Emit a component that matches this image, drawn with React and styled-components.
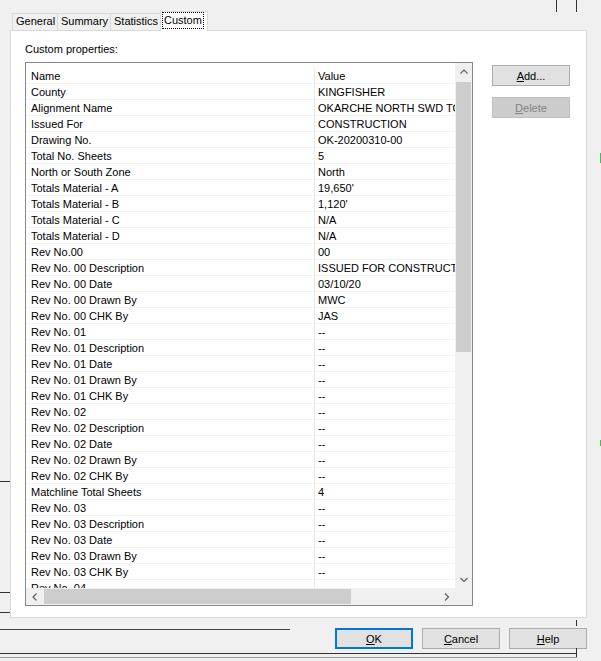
import React from 'react'
import styled, { createGlobalStyle, css } from 'styled-components'

const GlobalStyle = createGlobalStyle`
  html, body {
    margin: 0;
    padding: 0;
    background: #f0f0f0;
  }
  body {
    font-family: "Liberation Sans", Arial, sans-serif;
    font-size: 11px;
    color: #000;
  }
`

const Window = styled.div`
  position: relative;
  width: 601px;
  height: 661px;
  overflow: hidden;
  background: #f0f0f0;
  padding-top: 11px;
  box-sizing: border-box;
`

const TabStrip = styled.div`
  position: relative;
  z-index: 1;
  display: flex;
  align-items: flex-end;
  height: 20px;
  padding-left: 12px;
  margin-bottom: -1px;
`

const Tab = styled.div`
  box-sizing: border-box;
  width: ${p => p.$w}px;
  height: 17px;
  margin-bottom: 1px;
  margin-left: -1px;
  border: 1px solid #d9d9d9;
  border-bottom: none;
  background: #f0f0f0;
  line-height: 15px;
  padding-left: 3px;
  white-space: nowrap;
  &:first-child { margin-left: 0; }
  ${p => p.$active && css`
    height: 20px;
    margin-bottom: 0;
    background: #fff;
    padding: 1px 0 0 2px;
    z-index: 2;
  `}
`

const FocusText = styled.span`
  display: inline-block;
  padding: 0 1px;
  line-height: 15px;
  outline: 1px dotted #000;
`

const Panel = styled.div`
  box-sizing: border-box;
  width: 577px;
  height: 588px;
  margin-left: 10px;
  background: #fff;
  border: 1px solid #d9d9d9;
  padding: 11px 0 0 14px;
`

const Caption = styled.div`
  height: 14px;
  line-height: 14px;
`

const Body = styled.div`
  display: flex;
  align-items: flex-start;
  margin-top: 6px;
`

const ListBox = styled.div`
  box-sizing: border-box;
  width: 448px;
  height: 544px;
  border: 1px solid #828790;
  display: grid;
  grid-template-columns: 429px 17px;
  grid-template-rows: 525px 17px;
`

const Viewport = styled.div`
  overflow: hidden;
  background: #fff;
  padding-top: 5px;
`

const Row = styled.div`
  display: flex;
  box-sizing: border-box;
  height: 16px;
  border-bottom: 1px solid #f2f2f2;
  line-height: 16px;
  white-space: nowrap;
`

const NameCell = styled.div`
  flex: none;
  width: 288px;
  padding-left: 5px;
  box-sizing: border-box;
`

const ValueCell = styled.div`
  flex: none;
  width: 320px;
  padding-left: 3px;
  box-sizing: border-box;
  border-left: 1px solid #e8e8e8;
`

const VScroll = styled.div`
  display: flex;
  flex-direction: column;
  background: #f0f0f0;
`

const HScroll = styled.div`
  display: flex;
  background: #f0f0f0;
`

const Corner = styled.div`
  background: #f0f0f0;
`

const Arrow = styled.div`
  flex: none;
  width: 17px;
  height: 17px;
  display: flex;
  align-items: center;
  justify-content: center;
`

const Thumb = styled.div`
  flex: none;
  background: #cdcdcd;
  ${p => p.$vertical
    ? css`margin: 2px 1px 0; height: 270px;`
    : css`margin: 1px 0 1px 1px; width: 307px;`}
`

const Spacer = styled.div`
  flex: 1;
`

const ButtonColumn = styled.div`
  display: flex;
  flex-direction: column;
  gap: 11px;
  margin-left: 19px;
  padding-top: 3px;
`

const Button = styled.div`
  box-sizing: border-box;
  width: 78px;
  height: 21px;
  display: flex;
  align-items: center;
  justify-content: center;
  background: #e1e1e1;
  border: 1px solid #adadad;
  color: #000;
  ${p => p.$disabled && css`
    background: #cccccc;
    border-color: #bfbfbf;
    color: #838383;
  `}
  ${p => p.$default && css`
    border-color: #0078d7;
    box-shadow: inset 0 0 0 1px #0078d7;
  `}
`

const Footer = styled.div`
  display: flex;
  justify-content: flex-end;
  gap: 9px;
  margin-top: 10px;
  padding-right: 14px;
`

const Stroke = styled.div`
  position: absolute;
  left: ${p => p.$x}px;
  top: ${p => p.$y}px;
  width: ${p => p.$w}px;
  height: ${p => p.$h}px;
  background: ${p => p.$c || '#333'};
  pointer-events: none;
`

const Chevron = ({ dir }) => {
  const pts = {
    up: '0.5,4.5 4,1 7.5,4.5',
    down: '0.5,1 4,4.5 7.5,1',
    left: '4.5,0.5 1,4 4.5,7.5',
    right: '1,0.5 4.5,4 1,7.5',
  }[dir]
  const vertical = dir === 'up' || dir === 'down'
  return (
    <svg width={vertical ? 8 : 6} height={vertical ? 6 : 8}>
      <polyline points={pts} fill="none" stroke="#606060" strokeWidth="1.2" />
    </svg>
  )
}

const rows = [
  ['Name', 'Value'],
  ['County', 'KINGFISHER'],
  ['Alignment Name', 'OKARCHE NORTH SWD TO KINGFISHER'],
  ['Issued For', 'CONSTRUCTION'],
  ['Drawing No.', 'OK-20200310-00'],
  ['Total No. Sheets', '5'],
  ['North or South Zone', 'North'],
  ['Totals Material - A', "19,650'"],
  ['Totals Material - B', "1,120'"],
  ['Totals Material - C', 'N/A'],
  ['Totals Material - D', 'N/A'],
  ['Rev No.00', '00'],
  ['Rev No. 00 Description', 'ISSUED FOR CONSTRUCTION'],
  ['Rev No. 00 Date', '03/10/20'],
  ['Rev No. 00 Drawn By', 'MWC'],
  ['Rev No. 00 CHK By', 'JAS'],
  ['Rev No. 01', '--'],
  ['Rev No. 01 Description', '--'],
  ['Rev No. 01 Date', '--'],
  ['Rev No. 01 Drawn By', '--'],
  ['Rev No. 01 CHK By', '--'],
  ['Rev No. 02', '--'],
  ['Rev No. 02 Description', '--'],
  ['Rev No. 02 Date', '--'],
  ['Rev No. 02 Drawn By', '--'],
  ['Rev No. 02 CHK By', '--'],
  ['Matchline Total Sheets', '4'],
  ['Rev No. 03', '--'],
  ['Rev No. 03 Description', '--'],
  ['Rev No. 03 Date', '--'],
  ['Rev No. 03 Drawn By', '--'],
  ['Rev No. 03 CHK By', '--'],
  ['Rev No. 04', '--'],
  ['Rev No. 04 Description', '--'],
]

// stray lines from the drawing behind the dialog
const strokes = [
  { x: 556, y: 0, w: 1, h: 12 },
  { x: 576, y: 0, w: 1, h: 12 },
  { x: 0, y: 481, w: 10, h: 1 },
  { x: 0, y: 592, w: 10, h: 1 },
  { x: 0, y: 612, w: 10, h: 1 },
  { x: 0, y: 629, w: 290, h: 1, c: '#444' },
  { x: 576, y: 620, w: 1, h: 6 },
  { x: 0, y: 653, w: 577, h: 1, c: '#333' },
  { x: 0, y: 657, w: 577, h: 1, c: '#9a9a9a' },
  { x: 576, y: 648, w: 1, h: 9 },
  { x: 600, y: 153, w: 1, h: 10, c: '#22d040' },
  { x: 600, y: 440, w: 1, h: 6, c: '#22d040' },
]

const tabs = [
  { label: 'General', w: 46 },
  { label: 'Summary', w: 54 },
  { label: 'Statistics', w: 51 },
  { label: 'Custom', w: 48, active: true },
]

const App = () => {
  return (
    <Window>
      <GlobalStyle />
      <TabStrip>
        {tabs.map(t => (
          <Tab key={t.label} $w={t.w} $active={t.active}>
            {t.active ? <FocusText>{t.label}</FocusText> : t.label}
          </Tab>
        ))}
      </TabStrip>
      <Panel>
        <Caption>Custom properties:</Caption>
        <Body>
          <ListBox>
            <Viewport>
              {rows.map(([name, value], i) => (
                <Row key={i}>
                  <NameCell>{name}</NameCell>
                  <ValueCell>{value}</ValueCell>
                </Row>
              ))}
            </Viewport>
            <VScroll>
              <Arrow><Chevron dir="up" /></Arrow>
              <Thumb $vertical />
              <Spacer />
              <Arrow><Chevron dir="down" /></Arrow>
            </VScroll>
            <HScroll>
              <Arrow><Chevron dir="left" /></Arrow>
              <Thumb />
              <Spacer />
              <Arrow><Chevron dir="right" /></Arrow>
            </HScroll>
            <Corner />
          </ListBox>
          <ButtonColumn>
            <Button><span><u>A</u>dd...</span></Button>
            <Button $disabled><span><u>D</u>elete</span></Button>
          </ButtonColumn>
        </Body>
      </Panel>
      <Footer>
        <Button $default><span><u>O</u>K</span></Button>
        <Button><span><u>C</u>ancel</span></Button>
        <Button><span><u>H</u>elp</span></Button>
      </Footer>
      {strokes.map((s, i) => (
        <Stroke key={i} $x={s.x} $y={s.y} $w={s.w} $h={s.h} $c={s.c} />
      ))}
    </Window>
  )
}

export default App
